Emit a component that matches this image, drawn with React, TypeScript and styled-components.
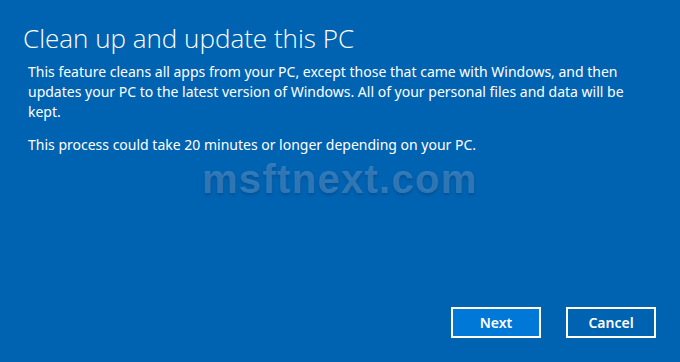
import React from 'react';
import styled, { createGlobalStyle } from 'styled-components';

const GlobalStyle = createGlobalStyle`
  html, body {
    margin: 0;
    padding: 0;
    background: #0063b1;
  }
  * {
    box-sizing: border-box;
  }
`;

const Dialog = styled.div`
  position: relative;
  width: 680px;
  height: 362px;
  background: #0063b1;
  color: #ffffff;
  font-family: 'Noto Sans', 'Open Sans', sans-serif;
  display: flex;
  flex-direction: column;
  padding: 18px 24px 24px 23px;
  overflow: hidden;
`;

const Title = styled.h1`
  margin: 0;
  font-family: 'Open Sans', 'Noto Sans', sans-serif;
  font-weight: 300;
  font-size: 26px;
  line-height: 40px;
`;

const Body = styled.div`
  padding-left: 5px;
  margin-top: 4px;
  flex: 1;
`;

const Paragraph = styled.p`
  margin: 0 0 13px;
  font-size: 14px;
  line-height: 20px;
`;

const Actions = styled.div`
  display: flex;
  justify-content: flex-end;
  gap: 25px;
  padding-right: 0;
`;

const Button = styled.button<{ $primary?: boolean }>`
  width: 90px;
  height: 31px;
  border: 2px solid #ffffff;
  background: ${(p) => (p.$primary ? '#0078d7' : 'transparent')};
  color: #ffffff;
  font-family: 'Noto Sans', 'Open Sans', sans-serif;
  font-size: 14px;
  font-weight: 600;
  padding: 0;
`;

const Watermark = styled.div`
  position: absolute;
  left: 202px;
  top: 159px;
  font-family: 'Liberation Sans', Arial, sans-serif;
  font-weight: 700;
  font-size: 40px;
  line-height: 1;
  letter-spacing: 1.3px;
  color: rgba(120, 170, 215, 0.42);
  text-shadow: 0 2px 3px rgba(0, 50, 110, 0.35);
  pointer-events: none;
`;

export default function App() {
  return (
    <>
      <GlobalStyle />
      <Dialog>
        <Title>Clean up and update this PC</Title>
        <Body>
          <Paragraph>
            This feature cleans all apps from your PC, except those that came with Windows, and then
            updates your PC to the latest version of Windows. All of your personal files and data will be
            kept.
          </Paragraph>
          <Paragraph>This process could take 20 minutes or longer depending on your PC.</Paragraph>
        </Body>
        <Actions>
          <Button $primary>Next</Button>
          <Button>Cancel</Button>
        </Actions>
        <Watermark>msftnext.com</Watermark>
      </Dialog>
    </>
  );
}
